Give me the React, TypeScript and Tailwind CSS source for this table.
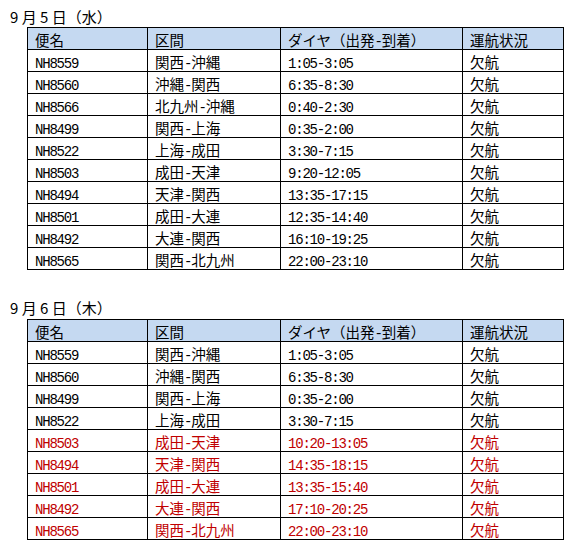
import React from "react";

type Row = { no: string; route: string; time: string; status: string; red?: boolean };

const day5: Row[] = [
  { no: "NH8559", route: "関西-沖縄", time: "1:05-3:05", status: "欠航" },
  { no: "NH8560", route: "沖縄-関西", time: "6:35-8:30", status: "欠航" },
  { no: "NH8566", route: "北九州-沖縄", time: "0:40-2:30", status: "欠航" },
  { no: "NH8499", route: "関西-上海", time: "0:35-2:00", status: "欠航" },
  { no: "NH8522", route: "上海-成田", time: "3:30-7:15", status: "欠航" },
  { no: "NH8503", route: "成田-天津", time: "9:20-12:05", status: "欠航" },
  { no: "NH8494", route: "天津-関西", time: "13:35-17:15", status: "欠航" },
  { no: "NH8501", route: "成田-大連", time: "12:35-14:40", status: "欠航" },
  { no: "NH8492", route: "大連-関西", time: "16:10-19:25", status: "欠航" },
  { no: "NH8565", route: "関西-北九州", time: "22:00-23:10", status: "欠航" },
];

const day6: Row[] = [
  { no: "NH8559", route: "関西-沖縄", time: "1:05-3:05", status: "欠航" },
  { no: "NH8560", route: "沖縄-関西", time: "6:35-8:30", status: "欠航" },
  { no: "NH8499", route: "関西-上海", time: "0:35-2:00", status: "欠航" },
  { no: "NH8522", route: "上海-成田", time: "3:30-7:15", status: "欠航" },
  { no: "NH8503", route: "成田-天津", time: "10:20-13:05", status: "欠航", red: true },
  { no: "NH8494", route: "天津-関西", time: "14:35-18:15", status: "欠航", red: true },
  { no: "NH8501", route: "成田-大連", time: "13:35-15:40", status: "欠航", red: true },
  { no: "NH8492", route: "大連-関西", time: "17:10-20:25", status: "欠航", red: true },
  { no: "NH8565", route: "関西-北九州", time: "22:00-23:10", status: "欠航", red: true },
];

// half-width chars in a narrow mono face, the rest in the CJK face
function Mixed({ text }: { text: string }) {
  const parts = text.match(/[\x20-\x7e]+|[^\x20-\x7e]+/g) ?? [];
  return (
    <>
      {parts.map((p, i) =>
        /^[\x20-\x7e]+$/.test(p) ? (
          <span
            key={i}
            className="text-[14px] leading-[21px] tracking-[-1.2px] [font-family:'Liberation_Mono',monospace]"
          >
            {p}
          </span>
        ) : (
          <span key={i} className="leading-[21px]">
            {p}
          </span>
        )
      )}
    </>
  );
}

function Cell({ text, header }: { text: string; header?: boolean }) {
  return (
    <td
      className={`border border-black p-0 align-top ${header ? "bg-[#c5d9f1]" : ""}`}
    >
      <div className="h-[21px] overflow-hidden whitespace-nowrap pl-[7px] pt-[1px] leading-[21px]">
        <Mixed text={text} />
      </div>
    </td>
  );
}

function Schedule({ rows }: { rows: Row[] }) {
  return (
    <table className="ml-[27px] table-fixed border-collapse">
      <colgroup>
        <col className="w-[120px]" />
        <col className="w-[133px]" />
        <col className="w-[182px]" />
        <col className="w-[101px]" />
      </colgroup>
      <tbody>
        <tr>
          <Cell header text="便名" />
          <Cell header text="区間" />
          <Cell header text="ダイヤ（出発-到着）" />
          <Cell header text="運航状況" />
        </tr>
        {rows.map((r, i) => (
          <tr key={i} className={r.red ? "text-[#c00000]" : "text-black"}>
            <Cell text={r.no} />
            <Cell text={r.route} />
            <Cell text={r.time} />
            <Cell text={r.status} />
          </tr>
        ))}
      </tbody>
    </table>
  );
}

export default function App() {
  return (
    <div className="min-h-[545px] w-[581px] bg-white text-[14.5px] text-black [font-family:'Noto_Sans_CJK_JP',sans-serif]">
      <div className="h-[27px] overflow-hidden pl-[10px] pt-[6px] text-[15px] leading-[21px]">
        9 月 5 日（水）
      </div>
      <Schedule rows={day5} />
      <div className="mt-[27px] mb-[1px] h-[21px] overflow-hidden pl-[10px] text-[15px] leading-[21px]">
        9 月 6 日（木）
      </div>
      <Schedule rows={day6} />
    </div>
  );
}
